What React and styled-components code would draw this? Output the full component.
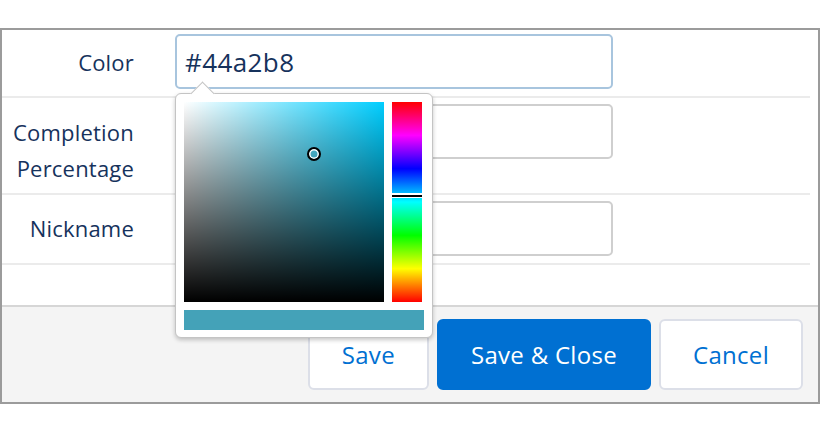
import React from 'react';
import styled, { createGlobalStyle } from 'styled-components';

const GlobalStyle = createGlobalStyle`
  * { box-sizing: border-box; }
  body {
    margin: 0;
    background: #fff;
    font-family: "Open Sans", "Noto Sans", sans-serif;
    -webkit-font-smoothing: antialiased;
  }
`;

const COLOR = '#44a2b8';

function ColorPicker({ color }) {
  return (
    <Popover>
      <Arrow />
      <PickerGrid>
        <Saturation $hue="#00ceff">
          <Pointer style={{ left: 130, top: 52 }} />
        </Saturation>
        <HueBar>
          <HueHandle style={{ top: 91 }} />
        </HueBar>
      </PickerGrid>
      <Preview $color={color} />
    </Popover>
  );
}

export default function App() {
  const rows = [
    { label: 'Color', value: COLOR, focused: true },
    { label: 'Completion Percentage', value: '' },
    { label: 'Nickname', value: '' },
  ];

  return (
    <Page>
      <GlobalStyle />
      <Frame>
        <Body>
          {rows.map((row) => (
            <Row key={row.label}>
              <Label>{row.label}</Label>
              <Field>
                <Input $focused={row.focused} defaultValue={row.value} readOnly />
                {row.focused && <ColorPicker color={COLOR} />}
              </Field>
            </Row>
          ))}
          <Spacer />
        </Body>
        <Footer>
          <Button>Save</Button>
          <Button $brand>Save &amp; Close</Button>
          <Button>Cancel</Button>
        </Footer>
      </Frame>
    </Page>
  );
}

const Page = styled.div`
  padding-top: 28px;
  height: 429px;
`;

const Frame = styled.div`
  width: 820px;
  border: 2px solid #9b9b9b;
  background: #fff;
`;

const Body = styled.div`
  margin-right: 8px;
`;

const Row = styled.div`
  display: flex;
  align-items: flex-start;
  padding: 6px 0 7px;
  border-bottom: 2px solid #ebebeb;

  &:first-child {
    padding-top: 4px;
  }
`;

const Label = styled.div`
  width: 132px;
  padding-top: 9.5px;
  text-align: right;
  font-size: 22px;
  line-height: 36px;
  letter-spacing: 0.2px;
  color: #16325c;
`;

const Field = styled.div`
  position: relative;
  margin-left: 41px;
`;

const Input = styled.input`
  display: block;
  width: 438px;
  height: 55px;
  padding: 0 8px;
  border: 2px solid ${(p) => (p.$focused ? '#a8c5de' : '#cfcfcf')};
  border-radius: 5px;
  background: #fff;
  font-family: inherit;
  font-size: 26px;
  letter-spacing: 0.4px;
  color: #16325c;
  outline: none;
`;

const Spacer = styled.div`
  height: 40px;
`;

const Footer = styled.div`
  display: flex;
  justify-content: flex-end;
  gap: 8px;
  padding: 12px 15px 12px 0;
  border-top: 2px solid #d6d6d6;
  background: #f4f4f4;
`;

const Button = styled.button`
  height: 71px;
  padding: 0 32px;
  border: 2px solid ${(p) => (p.$brand ? '#0070d2' : '#dcdfe8')};
  border-radius: 6px;
  background: ${(p) => (p.$brand ? '#0070d2' : '#fff')};
  color: ${(p) => (p.$brand ? '#fff' : '#0070d2')};
  font-family: inherit;
  font-size: 24px;
  letter-spacing: 0.3px;
  cursor: pointer;
`;

const Popover = styled.div`
  position: absolute;
  left: 0;
  top: 59px;
  z-index: 2;
  width: 258px;
  padding: 8px 8px 7px;
  background: #fff;
  border: 1px solid #c4c4c4;
  border-radius: 6px;
  box-shadow: 0 2px 4px rgba(0, 0, 0, 0.22);
`;

const Arrow = styled.div`
  position: absolute;
  left: 18px;
  top: -9.5px;
  width: 17px;
  height: 17px;
  background: #fff;
  border-left: 1px solid #c4c4c4;
  border-top: 1px solid #c4c4c4;
  transform: rotate(45deg);
`;

const PickerGrid = styled.div`
  position: relative;
  display: flex;
  gap: 8px;
`;

const Saturation = styled.div`
  position: relative;
  width: 200px;
  height: 200px;
  background:
    linear-gradient(to top, #000, rgba(0, 0, 0, 0)),
    linear-gradient(to right, #fff, rgba(255, 255, 255, 0)),
    ${(p) => p.$hue};
`;

const Pointer = styled.div`
  position: absolute;
  width: 14px;
  height: 14px;
  margin: -7px 0 0 -7px;
  border: 2.5px solid #000;
  border-radius: 50%;
  box-shadow: inset 0 0 0 1.5px #fff;
`;

const HueBar = styled.div`
  position: relative;
  width: 30px;
  height: 200px;
  background: linear-gradient(
    to bottom,
    #ff0000 0%,
    #ff00ff 16.66%,
    #0000ff 33.33%,
    #00ffff 50%,
    #00ff00 66.66%,
    #ffff00 83.33%,
    #ff0000 100%
  );
`;

const HueHandle = styled.div`
  position: absolute;
  left: 0;
  right: 0;
  height: 5px;
  background: #000;
  border-top: 2px solid #fff;
  border-bottom: 1px solid #fff;
`;

const Preview = styled.div`
  margin-top: 8px;
  height: 20px;
  background: ${(p) => p.$color};
`;
